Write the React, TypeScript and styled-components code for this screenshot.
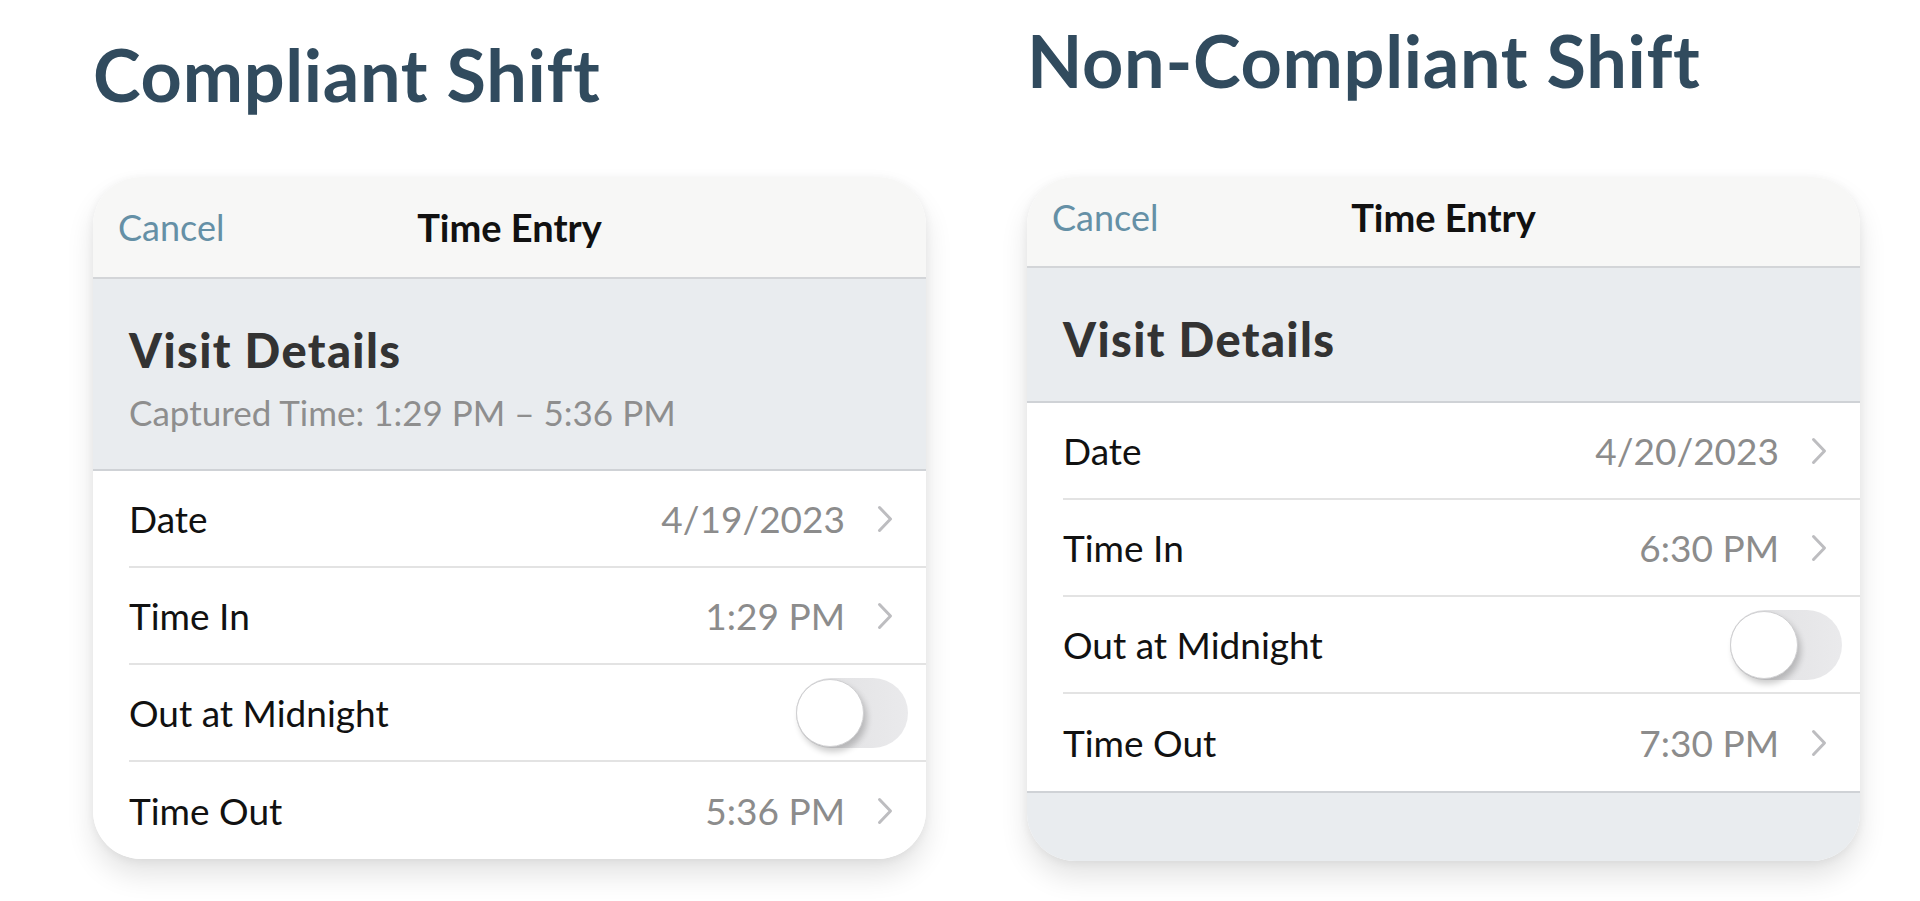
import React from "react";
import styled, { createGlobalStyle } from "styled-components";

const Global = createGlobalStyle`
  html, body {
    margin: 0;
    padding: 0;
    background: #ffffff;
  }
  body {
    font-family: Lato, "Noto Sans", "Liberation Sans", sans-serif;
  }
  * { box-sizing: border-box; }
`;

const Page = styled.main`
  width: 1920px;
  height: 901px;
  display: grid;
  grid-template-columns: 833px 833px;
  column-gap: 101px;
  padding-left: 93px;
  overflow: hidden;
`;

const Column = styled.section`
  display: grid;
  grid-template-rows: 177px auto;
`;

const Title = styled.h1<{ $top: number }>`
  margin: 0;
  padding-top: ${(p) => p.$top}px;
  font-family: Lato, "Noto Sans", sans-serif;
  font-weight: 700;
  font-size: 72px;
  letter-spacing: 0.7px;
  line-height: 1;
  color: #314b5e;
  white-space: nowrap;
`;

const Card = styled.div`
  width: 833px;
  align-self: start;
  border-radius: 48px;
  overflow: hidden;
  background: #ffffff;
  box-shadow: 0 16px 28px rgba(0, 0, 0, 0.11), 0 2px 10px rgba(0, 0, 0, 0.06);
`;

const Header = styled.header<{ $height: number; $lift: number }>`
  height: ${(p) => p.$height}px;
  display: grid;
  grid-template-columns: 1fr auto 1fr;
  align-items: center;
  padding: 0 25px ${(p) => p.$lift}px;
  background: #f7f7f6;
  border-bottom: 2px solid #d3d5d8;
`;

const Cancel = styled.span`
  font-size: 36px;
  line-height: 1;
  color: #6590a6;
`;

const HeaderTitle = styled.span`
  font-size: 38px;
  font-weight: 700;
  line-height: 1;
  color: #111111;
`;

const Section = styled.div`
  background: #e9ecef;
  padding: 48px 36px 38px;
  border-bottom: 2px solid #cfd2d6;
`;

const Heading = styled.h2`
  margin: 0;
  font-size: 47px;
  font-weight: 900;
  letter-spacing: 1.4px;
  line-height: 1;
  color: #333333;
`;

const Sub = styled.p`
  margin: 21px 0 1px;
  font-size: 35px;
  line-height: 1;
  color: #8e8e8e;
`;

const List = styled.div`
  padding-left: 36px;
  background: #ffffff;
`;

const Row = styled.div`
  height: 97px;
  display: flex;
  align-items: center;
  padding-right: 18px;
  border-bottom: 2px solid #e3e3e3;
  &:last-child {
    border-bottom: none;
  }
`;

const Label = styled.span`
  flex: 1;
  font-size: 37px;
  line-height: 1;
  color: #111111;
`;

const Value = styled.span`
  font-size: 37px;
  line-height: 1;
  color: #8c8c8c;
  margin-right: 32px;
`;

const ChevronSvg = styled.svg`
  width: 16px;
  height: 28px;
  margin-right: 15px;
  flex: none;
`;

const Track = styled.div`
  width: 112px;
  height: 70px;
  border-radius: 35px;
  display: flex;
  align-items: center;
  background: linear-gradient(90deg, #d6d6d8 0%, #e4e4e6 45%, #eaeaec 100%);
  flex: none;
`;

const Knob = styled.div`
  width: 68px;
  height: 68px;
  border-radius: 50%;
  background: #ffffff;
  border: 1.5px solid #d0d0d2;
  box-shadow: 3px 5px 6px rgba(0, 0, 0, 0.2);
`;

const Footer = styled.div`
  height: 70px;
  background: #e9ecef;
  border-top: 2px solid #cfd2d6;
`;

const Chevron = () => (
  <ChevronSvg viewBox="0 0 16 28">
    <path
      d="M2.5 2.5 L13.5 14 L2.5 25.5"
      fill="none"
      stroke="#bdbdc0"
      strokeWidth="3"
      strokeLinecap="round"
      strokeLinejoin="round"
    />
  </ChevronSvg>
);

const Toggle = () => (
  <Track>
    <Knob />
  </Track>
);

type Entry = { date: string; timeIn: string; timeOut: string };

const Rows = ({ e }: { e: Entry }) => (
  <List>
    <Row>
      <Label>Date</Label>
      <Value>{e.date}</Value>
      <Chevron />
    </Row>
    <Row>
      <Label>Time In</Label>
      <Value>{e.timeIn}</Value>
      <Chevron />
    </Row>
    <Row>
      <Label>Out at Midnight</Label>
      <Toggle />
    </Row>
    <Row>
      <Label>Time Out</Label>
      <Value>{e.timeOut}</Value>
      <Chevron />
    </Row>
  </List>
);

const TopBar = ({ height, lift }: { height: number; lift: number }) => (
  <Header $height={height} $lift={lift}>
    <Cancel>Cancel</Cancel>
    <HeaderTitle>Time Entry</HeaderTitle>
    <span />
  </Header>
);

export default function App() {
  return (
    <>
      <Global />
      <Page>
        <Column>
          <Title $top={38}>Compliant Shift</Title>
          <Card>
            <TopBar height={102} lift={0} />
            <Section>
              <Heading>Visit Details</Heading>
              <Sub>Captured Time: 1:29 PM – 5:36 PM</Sub>
            </Section>
            <Rows e={{ date: "4/19/2023", timeIn: "1:29 PM", timeOut: "5:36 PM" }} />
          </Card>
        </Column>
        <Column>
          <Title $top={24}>Non-Compliant Shift</Title>
          <Card>
            <TopBar height={91} lift={9} />
            <Section>
              <Heading>Visit Details</Heading>
            </Section>
            <Rows e={{ date: "4/20/2023", timeIn: "6:30 PM", timeOut: "7:30 PM" }} />
            <Footer />
          </Card>
        </Column>
      </Page>
    </>
  );
}
